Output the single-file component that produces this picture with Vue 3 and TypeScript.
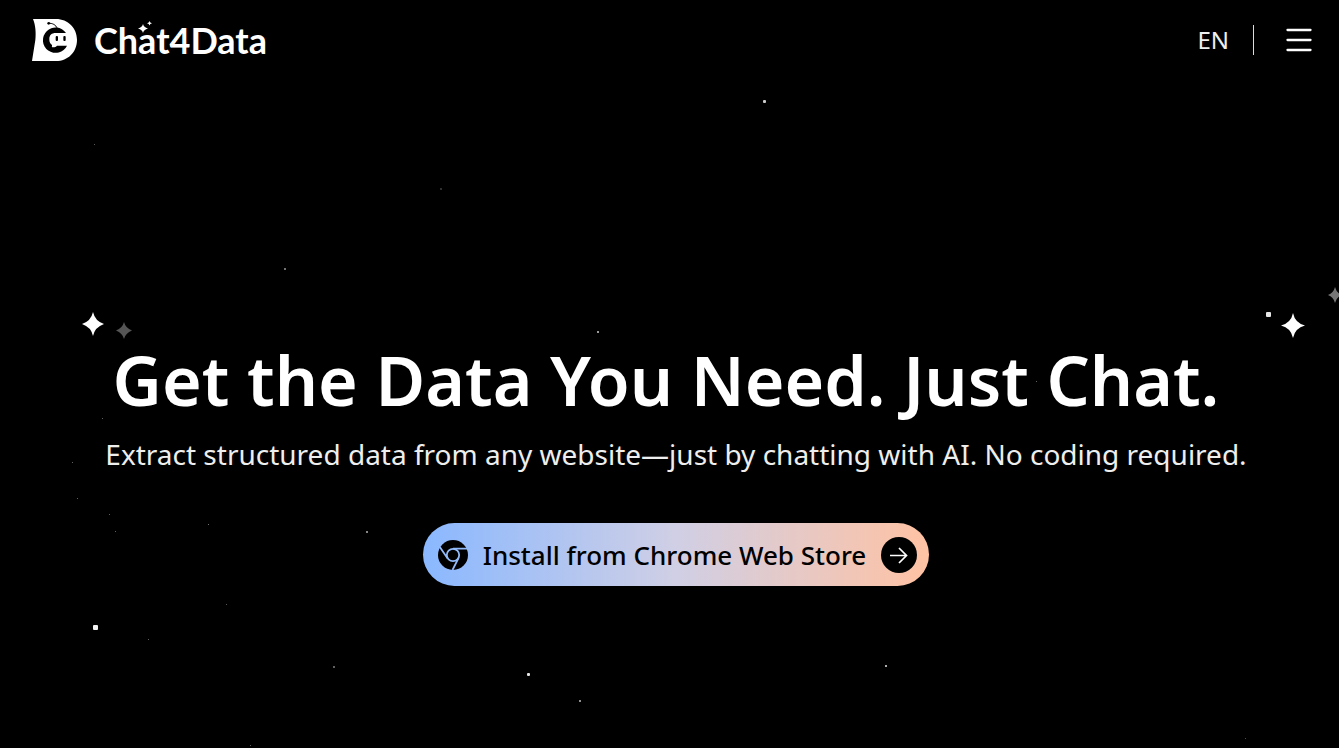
<script setup lang="ts">
interface Star {
  x: number
  y: number
  size: number
  alpha: number
}

const stars: Star[] = [
  { x: 763, y: 100, size: 3, alpha: 0.8 },
  { x: 94, y: 144, size: 1, alpha: 0.45 },
  { x: 440, y: 188, size: 2, alpha: 0.25 },
  { x: 284, y: 268, size: 2, alpha: 0.6 },
  { x: 597, y: 331, size: 2, alpha: 0.8 },
  { x: 1036, y: 381, size: 1, alpha: 0.5 },
  { x: 1266, y: 312, size: 5, alpha: 0.9 },
  { x: 102, y: 418, size: 1, alpha: 0.5 },
  { x: 72, y: 462, size: 1, alpha: 0.5 },
  { x: 77, y: 498, size: 1, alpha: 0.5 },
  { x: 109, y: 514, size: 1, alpha: 0.5 },
  { x: 115, y: 531, size: 1, alpha: 0.5 },
  { x: 208, y: 524, size: 1, alpha: 0.6 },
  { x: 366, y: 531, size: 2, alpha: 0.7 },
  { x: 226, y: 604, size: 1, alpha: 0.45 },
  { x: 93, y: 625, size: 5, alpha: 0.95 },
  { x: 148, y: 639, size: 1, alpha: 0.5 },
  { x: 333, y: 666, size: 2, alpha: 0.5 },
  { x: 527, y: 673, size: 3, alpha: 0.9 },
  { x: 579, y: 700, size: 2, alpha: 0.75 },
  { x: 885, y: 665, size: 2, alpha: 0.9 },
  { x: 250, y: 745, size: 1, alpha: 0.5 },
  { x: 1245, y: 738, size: 1, alpha: 0.4 },
]

const starStyle = (s: Star) => ({
  left: `${s.x}px`,
  top: `${s.y}px`,
  width: `${s.size}px`,
  height: `${s.size}px`,
  opacity: s.alpha,
})
</script>

<template>
  <div class="page">
    <div class="sky" aria-hidden="true">
      <span v-for="(s, i) in stars" :key="i" class="star" :style="starStyle(s)"></span>
    </div>

    <header class="bar">
      <a class="brand" href="#">
        <svg class="mark" viewBox="36 33 135 126" aria-hidden="true">
          <path
            fill="#fff"
            d="M39 33H108C144 33 171 60 171 95C171 132 144 159 108 159H36L46 96C48 76 47 52 39 33Z"
          />
          <path
            fill="#000"
            d="M138 75A38 38 0 1 0 141 113H111C107 117 102 119 95 117C98 113 96 110 92 107C89 104 88 99 88 93C88 81 95 75 107 75Z"
          />
          <circle cx="86" cy="46" r="4" fill="#000" />
          <path fill="none" stroke="#000" stroke-width="3" d="M86 46C96 45 108 50 112 62" />
          <rect x="107" y="84" width="7" height="15" rx="3" fill="#000" />
          <rect x="130" y="84" width="7" height="15" rx="3" fill="#000" />
        </svg>
        <span class="name">
          Chat4Data
          <svg class="glint" viewBox="0 0 14 12" aria-hidden="true">
            <path fill="#fff" d="M5 3Q5.700 6.300 10 7.500Q5.700 8.500 5 12Q4.300 8.500 0 7.500Q4.300 6.300 5 3Z" />
            <path fill="#fff" d="M11.500 0Q11.800 1.700 14 2.200Q11.800 2.700 11.500 4.500Q11.200 2.700 9 2.200Q11.200 1.700 11.500 0Z" />
          </svg>
        </span>
      </a>
      <div class="tools">
        <button class="lang" type="button">EN</button>
        <button class="menu" type="button" aria-label="Menu">
          <svg width="26" height="24" viewBox="0 0 26 24" aria-hidden="true">
            <path d="M1.500 2H24.500M1.500 12H24.500M1.500 22H24.500" stroke="#fff" stroke-width="2.300" stroke-linecap="round" />
          </svg>
        </button>
      </div>
    </header>

    <main class="hero">
      <div class="headline">
        <svg class="spark left" viewBox="0 0 50 28" aria-hidden="true">
          <path fill="#fff" d="M11 0Q13 9 22 12Q13 15 11 24Q9 15 0 12Q9 9 11 0Z" />
          <path fill="#555" d="M42 10Q43.500 16 50 18.500Q43.500 21 42 27Q40.500 21 34 18.500Q40.500 16 42 10Z" />
        </svg>
        <h1>Get the Data You Need. Just Chat.</h1>
      </div>
      <svg class="spark right" viewBox="0 0 62 52" aria-hidden="true">
        <path fill="#fff" d="M15 26Q17 36 27 38.500Q17 41 15 51Q13 41 3 38.500Q13 36 15 26Z" />
        <path fill="#777" d="M57 0Q58.500 6 64 8Q58.500 10 57 16Q55.500 10 50 8Q55.500 6 57 0Z" />
      </svg>
      <p>Extract structured data from any website—just by chatting with AI. No coding required.</p>
      <a class="install" href="#">
        <svg class="chrome" viewBox="0 0 30 30" aria-hidden="true">
          <circle cx="15" cy="15" r="15" fill="#000" />
          <g fill="none" stroke="#92bbfb" stroke-width="1.800">
            <circle cx="15" cy="15" r="6.200" />
            <path d="M15 8.600H29.500M9.500 18.200L1.800 7M20.500 18.200L14.500 30" />
          </g>
        </svg>
        <span>Install from Chrome Web Store</span>
        <svg class="arrow" viewBox="0 0 36 36" aria-hidden="true">
          <circle cx="18" cy="18" r="18" fill="#000" />
          <path d="M9 18.500H25.500M18 11L25.500 18.500L18 26" fill="none" stroke="#fff" stroke-width="1.700" />
        </svg>
      </a>
    </main>
  </div>
</template>

<style>
body {
  margin: 0;
  background: #000;
}
</style>

<style scoped>
.page {
  position: relative;
  min-height: 100vh;
  overflow: hidden;
  background: #000;
  color: #fff;
  font-family: "Segoe UI", "Noto Sans", sans-serif;
}
.sky {
  position: absolute;
  inset: 0;
  pointer-events: none;
}
.star {
  position: absolute;
  border-radius: 1px;
  background: #fff;
}
.bar {
  position: relative;
  display: flex;
  align-items: center;
  justify-content: space-between;
  height: 80px;
  padding: 0 27px 0 32px;
}
.brand {
  display: flex;
  align-items: center;
  gap: 17px;
  color: #fff;
  text-decoration: none;
}
.mark {
  width: 45px;
  height: 42px;
}
.name {
  position: relative;
  font: 700 36px/44px Lato, sans-serif;
}
.glint {
  position: absolute;
  left: 44px;
  top: 3px;
  width: 14px;
  height: 12px;
}
.tools {
  display: flex;
  align-items: center;
}
button {
  border: 0;
  padding: 0;
  background: none;
  color: #f0f0f0;
  font: 400 24px/30px "Segoe UI", "Noto Sans", sans-serif;
}
.lang {
  padding-right: 24px;
  border-right: 1px solid #ddd;
}
.menu {
  display: flex;
  padding-left: 32px;
}
.hero {
  position: relative;
  display: flex;
  flex-direction: column;
  align-items: center;
  padding: 256px 0 0 13px;
}
.headline {
  position: relative;
  padding-right: 20px;
}
h1 {
  margin: 0;
  font-size: 68px;
  font-weight: 600;
  line-height: 88px;
  white-space: nowrap;
}
.spark {
  position: absolute;
}
.left {
  left: -31px;
  top: -24px;
  width: 50px;
  height: 28px;
}
.right {
  right: -1px;
  top: 207px;
  width: 62px;
  height: 52px;
}
p {
  margin: 10px 0 49px;
  color: #eee;
  font-size: 28px;
  line-height: 40px;
  white-space: nowrap;
}
.install {
  display: flex;
  align-items: center;
  gap: 15px;
  height: 63px;
  box-sizing: border-box;
  padding: 0 12px 0 15px;
  border-radius: 32px;
  background: linear-gradient(90deg, #8ab8ff, #d0cfe5 50%, #ffc2a3);
  color: #000;
  font-size: 26px;
  font-weight: 500;
  line-height: 36px;
  text-decoration: none;
  white-space: nowrap;
}
.chrome {
  width: 30px;
  height: 30px;
}
.arrow {
  width: 36px;
  height: 36px;
}
</style>
